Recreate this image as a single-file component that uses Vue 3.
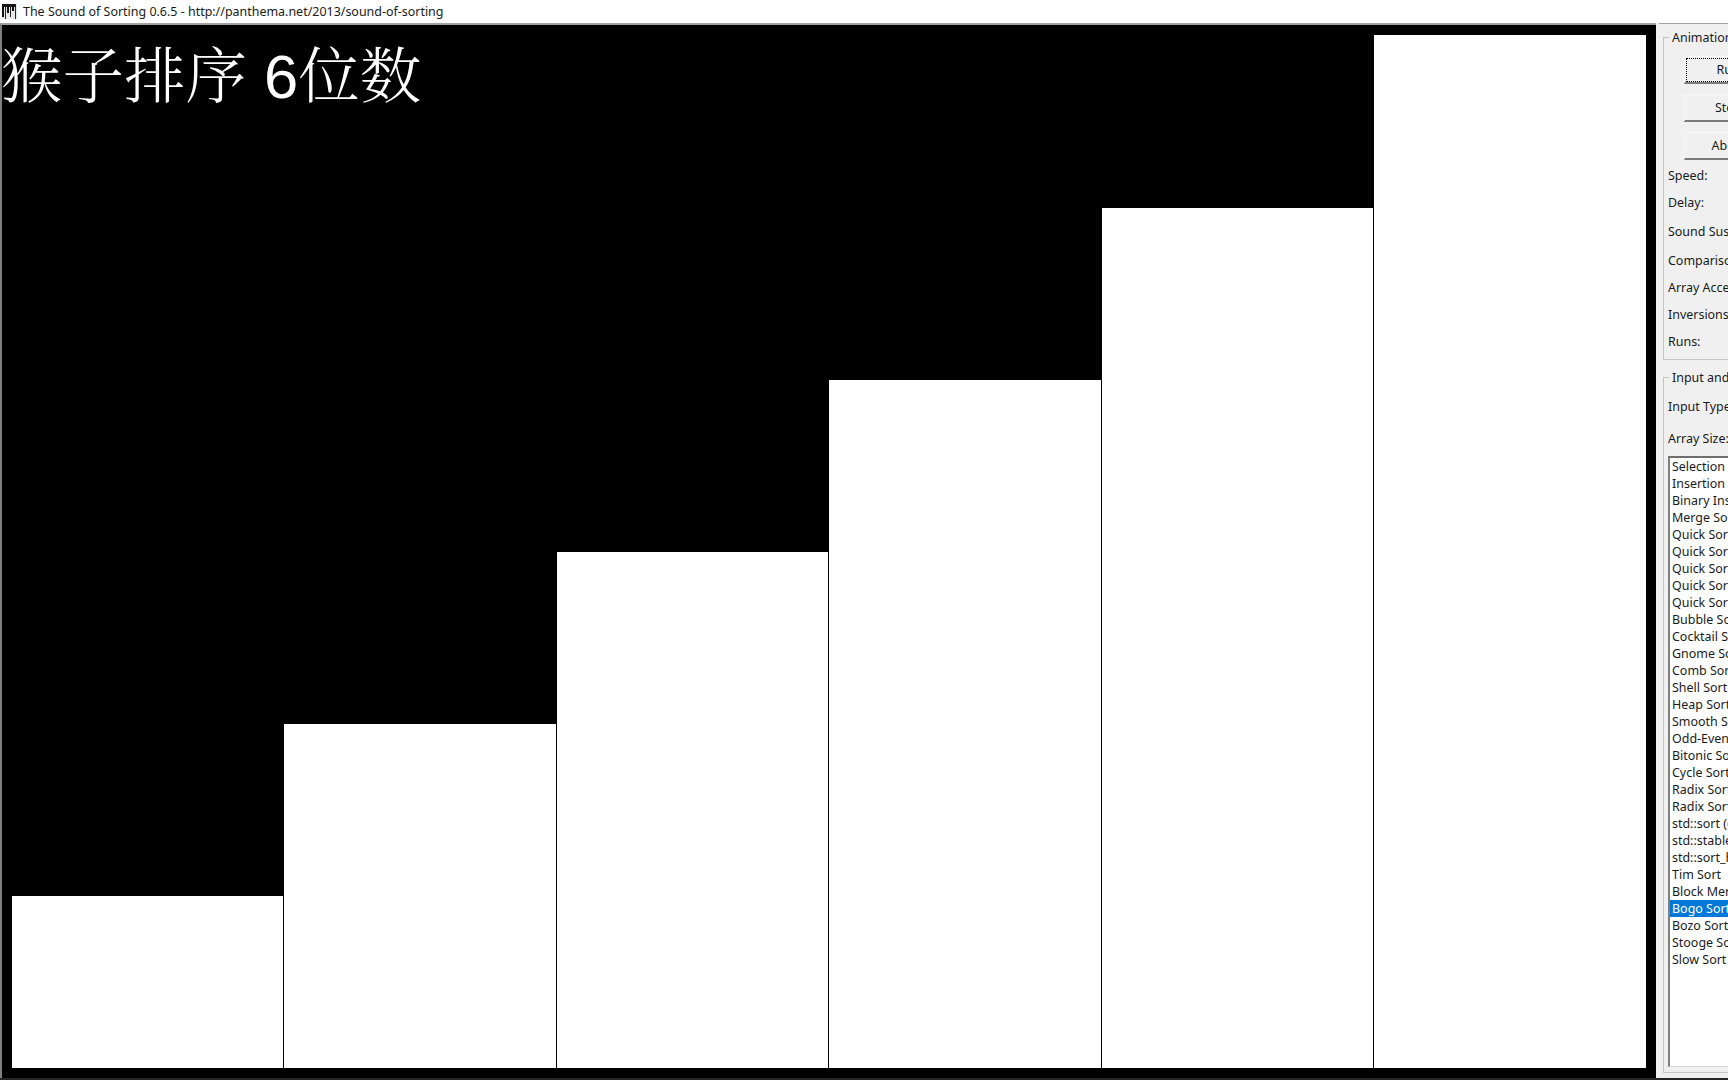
<script setup>
const bars = [172, 344, 516, 688, 860, 1033].map((v) => `${v}px`)
const stats = [
  { label: 'Speed:' },
  { label: 'Delay:' },
  { label: 'Sound Sustain:', tall: true },
  { label: 'Comparisons:' },
  { label: 'Array Accesses:' },
  { label: 'Inversions:' },
  { label: 'Runs:' },
]
const buttons = [
  { label: 'Run', focus: true },
  { label: 'Step' },
  { label: 'Abort' },
]
const algorithms = [
  'Selection Sort', 'Insertion Sort', 'Binary Insertion Sort', 'Merge Sort',
  'Quick Sort (LR ptrs)', 'Quick Sort (LL ptrs)', 'Quick Sort (Ternary LR)',
  'Quick Sort (Ternary LL)', 'Quick Sort (Dual Pivot)', 'Bubble Sort',
  'Cocktail Shaker Sort', 'Gnome Sort', 'Comb Sort', 'Shell Sort', 'Heap Sort',
  'Smooth Sort', 'Odd-Even Sort', 'Bitonic Sort', 'Cycle Sort', 'Radix Sort (LSD)',
  'Radix Sort (MSD)', 'std::sort (gcc)', 'std::stable_sort (gcc)',
  'std::sort_heap (gcc)', 'Tim Sort', 'Block Merge Sort (WikiSort)', 'Bogo Sort',
  'Bozo Sort', 'Stooge Sort', 'Slow Sort',
]
</script>

<template>
  <div class="window">
    <header class="titlebar">
      <svg class="app-icon" viewBox="0 0 15 15" width="15" height="15" aria-hidden="true">
        <rect width="15" height="15" fill="#e8e8e8" />
        <rect width="15" height="3" fill="#111" />
        <rect x="0" y="0" width="2" height="13" fill="#111" />
        <rect x="3" y="0" width="1" height="15" fill="#222" />
        <rect x="5" y="0" width="2" height="9" fill="#111" />
        <rect x="8" y="0" width="1" height="13" fill="#222" />
        <rect x="10" y="0" width="2" height="7" fill="#111" />
        <rect x="13" y="0" width="1" height="15" fill="#1c2a1c" />
        <rect x="14" y="0" width="1" height="15" fill="#d8f0d8" />
      </svg>
      <span class="title">The Sound of Sorting 0.6.5 - http://panthema.net/2013/sound-of-sorting</span>
    </header>
    <div class="content">
      <main class="stage">
        <div class="caption">猴子排序 6位数</div>
        <div class="bars">
          <div v-for="(h, i) in bars" :key="i" class="bar" :style="{ height: h }"></div>
        </div>
      </main>
      <aside class="panel">
        <div class="panel-inner">
          <fieldset class="group first">
            <legend>Animation</legend>
            <div class="buttons">
              <button v-for="b in buttons" :key="b.label" class="btn" :class="{ focus: b.focus }" type="button">
                <span class="btn-label">{{ b.label }}</span>
              </button>
            </div>
            <div class="stats">
              <div v-for="s in stats" :key="s.label" class="row" :class="{ tall: s.tall }">{{ s.label }}</div>
            </div>
          </fieldset>
          <fieldset class="group second">
            <legend>Input and Algorithm</legend>
            <div class="inputs">
              <div class="row input-row">Input Type:</div>
              <div class="row input-row">Array Size:</div>
            </div>
            <ul class="listbox">
              <li v-for="a in algorithms" :key="a" :class="{ selected: a === 'Bogo Sort' }">{{ a }}</li>
            </ul>
          </fieldset>
        </div>
      </aside>
    </div>
  </div>
</template>

<style>
html, body { margin: 0; background: #222; overflow: hidden; }
</style>

<style scoped>
.window {
  width: 1728px;
  height: 1080px;
  overflow: hidden;
  background: #262626;
  font-family: "Noto Sans", "Open Sans", sans-serif;
  font-size: 12.46px;
  color: #1a1a1a;
}
.titlebar {
  height: 23px;
  background: #fff;
  display: flex;
  align-items: center;
  padding-left: 2px;
  gap: 6px;
  box-sizing: border-box;
}
.app-icon { flex: none; }
.title { line-height: 23px; white-space: nowrap; }
.content {
  display: flex;
  height: 1055px;
  width: 2100px;
}
.stage {
  flex: none;
  width: 1656px;
  box-sizing: border-box;
  position: relative;
  background: #000;
  border-top: 2px solid #a3a3a3;
  border-left: 2px solid #808080;
  padding: 10px 10.5px 10px 10px;
}
.caption {
  position: absolute;
  left: -1px;
  top: 12px;
  font-family: "Liberation Sans", "Noto Serif CJK SC", "Noto Sans CJK SC", sans-serif;
  font-size: 61.5px;
  font-weight: 300;
  line-height: 80px;
  color: #fff;
  white-space: nowrap;
}
.bars {
  height: 100%;
  display: flex;
  align-items: flex-end;
  gap: 1px;
}
.bar { flex: 1; background: #fff; }
.panel {
  flex: 1;
  background: #f0f0f0;
  padding-left: 3px;
}
.panel-inner {
  border-top: 1px solid #a3a3a3;
  padding: 4.5px 0 0 4px;
  height: 100%;
  box-sizing: border-box;
}
.group {
  margin: 0;
  padding: 0 0 5px;
  width: 400px;
  box-sizing: border-box;
  border: 1px solid #c4c4c4;
}
.group.first { padding-bottom: 4px; }
.group.second { margin-top: 9px; }
legend {
  margin-left: 5px;
  padding: 0 3px;
  line-height: 17px;
}
.buttons {
  display: flex;
  flex-direction: column;
  gap: 10px;
  margin: 10.5px 0 0 20px;
  width: 88px;
}
.btn {
  height: 28px;
  padding: 0;
  background: #f0f0f0;
  border: 1px solid #f8f8f8;
  border-bottom: 2px solid #7a7a7a;
  font: inherit;
  color: inherit;
  box-sizing: border-box;
}
.btn.focus { position: relative; }
.btn.focus::after {
  content: "";
  position: absolute;
  inset: 1px 1px 0 1px;
  border: 1px dotted #000;
}
.stats { padding: 1.5px 0 0 4px; }
.row { height: 27px; line-height: 27px; white-space: nowrap; }
.row.tall { height: 31px; line-height: 31px; }
.inputs { padding: 5.5px 0 0 4px; }
.input-row { height: 32px; line-height: 32px; }
.listbox {
  list-style: none;
  margin: 1px 0 0 4px;
  padding: 0;
  width: 300px;
  height: 611px;
  box-sizing: border-box;
  background: #fff;
  border-style: solid;
  border-width: 2px 1px 1px 2px;
  border-color: #6e6e6e #c0c0c0 #d8d8d8 #808080;
  overflow: hidden;
}
.listbox li {
  height: 17px;
  line-height: 17px;
  padding-left: 2px;
  white-space: nowrap;
}
.listbox li.selected { background: #0078d7; color: #fff; }
</style>
